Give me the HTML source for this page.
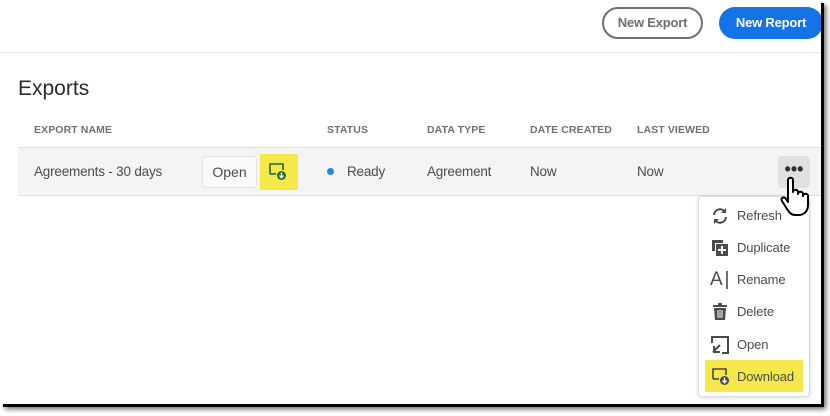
<!DOCTYPE html>
<html><head><style>
*{margin:0;padding:0;box-sizing:border-box}
body{width:830px;height:416px;background:#fff;position:relative;overflow:hidden;font-family:"Liberation Sans",sans-serif;color:#4b4b4b}
.page{position:absolute;left:0;top:0;width:821px;height:404px;background:#fff;box-shadow:3px 3px 0 #000,5px 5px 5px rgba(0,0,0,.6);overflow:hidden}
.a{position:absolute;white-space:nowrap}
.btn{position:absolute;border-radius:16px;font-weight:bold;font-size:13px;text-align:center;line-height:28px;letter-spacing:-.2px}
.th{position:absolute;top:124px;font-size:10.5px;font-weight:bold;color:#707070;letter-spacing:.1px}
.td{position:absolute;top:164px;font-size:13.5px;color:#4b4b4b;letter-spacing:-.2px}
.mi{position:absolute;left:737px;font-size:13px;color:#4b4b4b;letter-spacing:-.1px}
.ic{position:absolute;left:711px}
</style></head><body><div class="page">
<div class="btn" style="left:602px;top:7px;width:101px;height:32px;border:2px solid #707070;color:#6e6e6e">New Export</div>
<div class="btn" style="left:719px;top:7px;width:104px;height:32px;background:#1473e6;color:#fff;line-height:32px">New Report</div>
<div class="a" style="left:0;top:52px;width:821px;height:1px;background:#e4e4e4"></div>
<div class="a" style="left:18px;top:77px;font-size:21px;color:#2c2c2c">Exports</div>
<div class="th" style="left:34px">EXPORT NAME</div>
<div class="th" style="left:327px">STATUS</div>
<div class="th" style="left:427px">DATA TYPE</div>
<div class="th" style="left:530px">DATE CREATED</div>
<div class="th" style="left:637px">LAST VIEWED</div>
<div class="a" style="left:18px;top:147px;width:803px;height:49px;background:#f4f4f4;border-top:1px solid #e1e1e1;border-bottom:1px solid #e1e1e1"></div>
<div class="td" style="left:34px">Agreements - 30 days</div>
<div class="a" style="left:202px;top:156px;width:55px;height:32px;background:#fafafa;border:1px solid #e1e1e1;border-radius:4px;font-size:14px;text-align:center;line-height:31px">Open</div>
<div class="a" style="left:260px;top:154px;width:38px;height:36px;background:#f5e94a"></div>
<svg class="a" style="left:268px;top:162px" width="20" height="20" viewBox="0 0 20 20"><path d="M2 12V2h13v6" fill="none" stroke="#1d6b3c" stroke-width="1.6"/><path d="M2 12h6" stroke="#1d6b3c" stroke-width="1.6"/><circle cx="13.5" cy="13.5" r="4.5" fill="#1d6b3c"/><path d="M13.5 10.5v5M11.5 13.5l2 2.2 2-2.2" stroke="#fff" stroke-width="1.4" fill="none"/></svg>
<div class="a" style="left:327px;top:168px;width:7px;height:7px;border-radius:50%;background:#2680eb"></div>
<div class="td" style="left:347px">Ready</div>
<div class="td" style="left:427px">Agreement</div>
<div class="td" style="left:530px">Now</div>
<div class="td" style="left:637px">Now</div>
<div class="a" style="left:778px;top:156px;width:32px;height:32px;background:#e1e1e1;border-radius:4px;font-size:18px;font-weight:bold;text-align:center;line-height:26px;color:#333">•••</div>
<div class="a" style="left:698px;top:196px;width:112px;height:201px;background:#fff;border:1px solid #dadada;border-radius:4px;box-shadow:0 1px 4px rgba(0,0,0,.15)"></div>
<svg class="ic" style="top:207px" width="18" height="18" viewBox="0 0 18 18"><path d="M3 8a6 6 0 0 1 11-3M15 10a6 6 0 0 1-11 3" fill="none" stroke="#4b4b4b" stroke-width="2"/><path d="M15 1v5h-5zM3 17v-5h5z" fill="#4b4b4b"/></svg>
<div class="mi" style="top:208px">Refresh</div>
<svg class="ic" style="top:239px" width="18" height="18" viewBox="0 0 18 18"><path d="M1 1h11v3H4v8H1z" fill="#4b4b4b"/><rect x="5" y="5" width="12" height="12" fill="#4b4b4b"/><path d="M11 7v8M7 11h8" stroke="#fff" stroke-width="2"/></svg>
<div class="mi" style="top:240px">Duplicate</div>
<div class="a" style="left:710px;top:269px;font-size:19px;color:#4b4b4b">A</div><div class="a" style="left:726px;top:271px;width:2px;height:18px;background:#6e6e6e"></div>
<div class="mi" style="top:272px">Rename</div>
<svg class="ic" style="top:303px" width="18" height="18" viewBox="0 0 18 18"><rect x="2" y="2" width="14" height="2" fill="#4b4b4b"/><rect x="7" y="0" width="4" height="2" fill="#4b4b4b"/><path d="M3 5h12l-1 12H4z" fill="#4b4b4b"/><path d="M7 7v8M9 7v8M11 7v8" stroke="#fff" stroke-width="1"/></svg>
<div class="mi" style="top:304px">Delete</div>
<svg class="ic" style="top:336px" width="18" height="18" viewBox="0 0 18 18"><path d="M1 7V1h16v16h-6" fill="none" stroke="#4b4b4b" stroke-width="2"/><path d="M2 16l7-7M3 10v6h6" fill="none" stroke="#4b4b4b" stroke-width="2"/></svg>
<div class="mi" style="top:337px">Open</div>
<div class="a" style="left:705px;top:360px;width:98px;height:32px;background:#f5e94a"></div>
<svg class="ic" style="top:367px" width="20" height="20" viewBox="0 0 20 20"><path d="M2 12V2h13v6" fill="none" stroke="#4b4b4b" stroke-width="1.6"/><path d="M2 12h6" stroke="#4b4b4b" stroke-width="1.6"/><circle cx="13.5" cy="13.5" r="4.5" fill="#4b4b4b"/><path d="M13.5 10.5v5M11.5 13.5l2 2.2 2-2.2" stroke="#fff" stroke-width="1.4" fill="none"/></svg>
<div class="mi" style="top:369px">Download</div>
<svg class="a" style="left:780px;top:176px" width="32" height="42" viewBox="0 0 32 42"><path d="M8 4c0-3 5-3 5 0v12c0-3 5-3 5 0v2c0-3 5-3 5 0v2c0-3 5-3 5 0v9c0 6-4 10-9 10h-4c-4 0-6-3-8-6l-5-8c-2-3 2-5 4-2l2 3z" fill="#fff" stroke="#000" stroke-width="2" stroke-linejoin="round"/></svg>
</div></body></html>
